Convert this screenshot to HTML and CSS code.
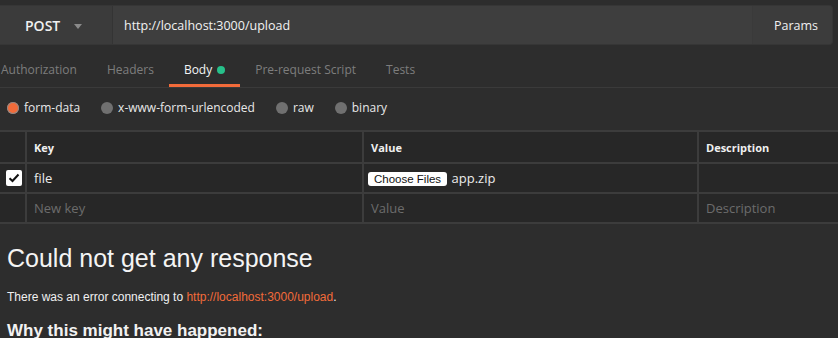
FILE: index.html
```html
<!DOCTYPE html>
<html>
<head>
<meta charset="utf-8">
<title>Postman - upload</title>
<link rel="stylesheet" href="styles.css">
</head>
<body>
	<div class="urlBar">
		<div class="method">POST <span class="caret"></span></div>
		<div class="url">http://localhost:3000/upload</div>
		<div class="params">Params</div>
	</div>

	<ul class="tabs">
		<li>Authorization</li>
		<li>Headers</li>
		<li class="active">Body <span class="dot"></span></li>
		<li>Pre-request Script</li>
		<li>Tests</li>
	</ul>

	<div class="modes">
		<label class="on"><span class="radio"></span>form-data</label>
		<label><span class="radio"></span>x-www-form-urlencoded</label>
		<label><span class="radio"></span>raw</label>
		<label><span class="radio"></span>binary</label>
	</div>

	<table class="kv">
		<tr class="head">
			<td class="chk"></td>
			<td class="key">Key</td>
			<td class="val">Value</td>
			<td>Description</td>
		</tr>
		<tr>
			<td class="chk"><span class="box">
				<svg width="12" height="10" viewBox="0 0 12 10"><path d="M1.5 5.2 L4.5 8 L10.5 1.5" fill="none" stroke="#111" stroke-width="2"/></svg>
			</span></td>
			<td>file</td>
			<td><span class="fileBtn">Choose Files</span> app.zip</td>
			<td></td>
		</tr>
		<tr class="empty">
			<td class="chk"></td>
			<td>New key</td>
			<td>Value</td>
			<td>Description</td>
		</tr>
	</table>

	<div class="resp">
		<h1>Could not get any response</h1>
		<p>There was an error connecting to <a href="javascript:;">http://localhost:3000/upload</a>.</p>
		<h2>Why this might have happened:</h2>
	</div>
</body>
</html>
```

FILE: styles.css
```css
*{ padding:0; margin:0; list-style:none; box-sizing:border-box;}
body{ background:#2d2d2d; color:#e6e6e6; font-family:"Open Sans","Noto Sans",sans-serif; font-size:12px; overflow:hidden;}

.urlBar{ display:flex; height:40px; margin:5px 5px 0 0; background:#3e3e3e; border-radius:0 4px 4px 0; border:1px solid #363636; border-left:0; font-size:12.5px;}
.method{ width:113px; display:flex; align-items:center; padding-left:25px; font-weight:600; font-size:14px; color:#f0f0f0; border-right:1px solid #343434; background:#3b3b3b;}
.caret{ display:inline-block; margin-left:14px; border:4px solid transparent; border-top:5px solid #8a8a8a; border-bottom:0; margin-top:2px;}
.url{ flex:1; display:flex; align-items:center; padding-left:11px; color:#f2f2f2;}
.params{ width:80px; display:flex; align-items:center; padding-left:21px; color:#f0f0f0; background:#3c3c3c; border-left:1px solid #3a3a3a; border-radius:0 4px 4px 0;}

.tabs{ display:flex; margin:0 0 0 -14px; height:43px; border-bottom:1px solid #3a3a3a;}
.tabs li{ padding:10px 15px 0; display:flex; align-items:center; color:#7d7d7d; border-bottom:3px solid transparent;}
.tabs li.active{ color:#f5f5f5; border-bottom-color:#f26b3a;}
.dot{ display:inline-block; width:8px; height:8px; border-radius:50%; background:#27c08a; margin-left:5px;}

.modes{ display:flex; align-items:center; height:42px; padding:0 0 3px 7px;}
.modes label{ display:flex; align-items:center; margin-right:21px; color:#e8e8e8;}
.radio{ width:12px; height:12px; border-radius:50%; background:#707070; margin-right:5px;}
.on .radio{ background:#f26b3a; box-shadow:inset 0 0 0 1px #8a8a8a;}

.kv{ width:100%; border-collapse:collapse; background:#272727; border-top:2px solid #3c3c3c; border-bottom:2px solid #3c3c3c; table-layout:fixed; font-size:13px;}
.kv td{ height:30px; border:2px solid #3c3c3c; padding:0 7px; color:#ececec; white-space:nowrap; overflow:hidden;}
.kv td:first-child{ border-left:0;}
.kv td:last-child{ border-right:0;}
.kv .chk{ width:26px; padding:0 0 0 6px;}
.kv .key{ width:337px;}
.kv .val{ width:335px;}
.kv .head td{ font-size:11px; font-weight:700; color:#f0f0f0; height:32px;}
.kv .empty td{ color:#6c6c6c;}
.box{ display:flex; align-items:center; justify-content:center; width:16px; height:16px; background:#fff; border-radius:2px;}
.fileBtn{ display:inline-block; background:#fff; color:#111; font-family:"Liberation Sans",sans-serif; font-size:11.5px; padding:1px 6px; border-radius:3px; margin:0 1px 0 -3px;}

.resp{ padding:19px 7px 0; font-family:"Liberation Sans",Arial,sans-serif;}
.resp h1{ font-size:25px; font-weight:400; color:#f4f4f4; line-height:30px;}
.resp p{ font-size:12px; color:#f0f0f0; margin-top:17px;}
.resp a{ color:#f26b3a; text-decoration:none;}
.resp h2{ font-size:17px; font-weight:700; color:#f2f2f2; margin-top:17px;}
```
